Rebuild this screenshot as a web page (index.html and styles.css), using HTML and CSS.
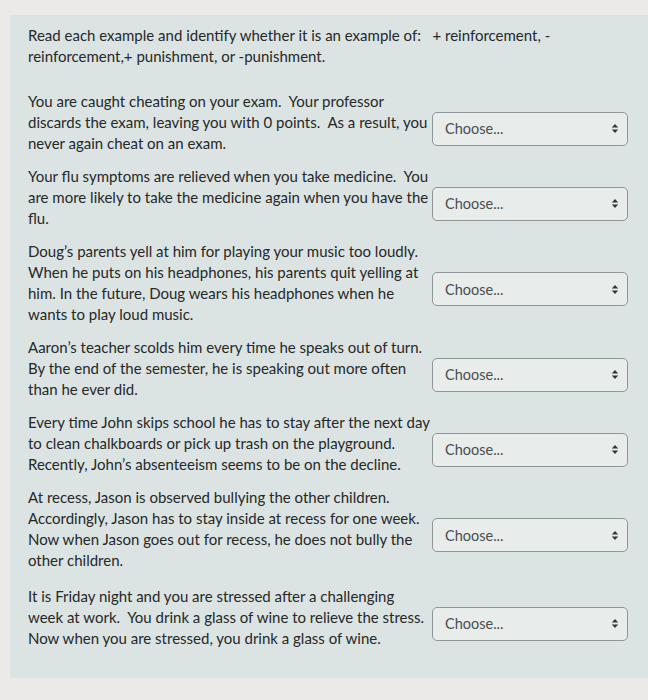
FILE: index.html
```html
<!DOCTYPE html>
<html lang="en">
<head>
<meta charset="utf-8">
<title>Reinforcement and punishment</title>
<link rel="stylesheet" href="styles.css">
</head>
<body>
<div class="panel">
  <p class="intro">Read each example and identify whether it is an example of:&nbsp;&nbsp; + reinforcement, -<br>reinforcement,+ punishment, or -punishment.</p>

  <div class="item">
    <p class="text">You are caught cheating on your exam.&nbsp; Your professor<br>discards the exam, leaving you with 0 points.&nbsp; As a result, you<br>never again cheat on an exam.</p>
    <div class="select"><span>Choose...</span><svg class="arrows" viewBox="0 0 8 12"><path d="M4 1 L7.5 5 H0.5 Z M4 11 L7.5 7 H0.5 Z"/></svg></div>
  </div>

  <div class="item">
    <p class="text">Your flu symptoms are relieved when you take medicine.&nbsp; You<br>are more likely to take the medicine again when you have the<br>flu.</p>
    <div class="select"><span>Choose...</span><svg class="arrows" viewBox="0 0 8 12"><path d="M4 1 L7.5 5 H0.5 Z M4 11 L7.5 7 H0.5 Z"/></svg></div>
  </div>

  <div class="item">
    <p class="text">Doug’s parents yell at him for playing your music too loudly.<br>When he puts on his headphones, his parents quit yelling at<br>him. In the future, Doug wears his headphones when he<br>wants to play loud music.</p>
    <div class="select"><span>Choose...</span><svg class="arrows" viewBox="0 0 8 12"><path d="M4 1 L7.5 5 H0.5 Z M4 11 L7.5 7 H0.5 Z"/></svg></div>
  </div>

  <div class="item">
    <p class="text">Aaron’s teacher scolds him every time he speaks out of turn.<br>By the end of the semester, he is speaking out more often<br>than he ever did.</p>
    <div class="select"><span>Choose...</span><svg class="arrows" viewBox="0 0 8 12"><path d="M4 1 L7.5 5 H0.5 Z M4 11 L7.5 7 H0.5 Z"/></svg></div>
  </div>

  <div class="item">
    <p class="text">Every time John skips school he has to stay after the next day<br>to clean chalkboards or pick up trash on the playground.<br>Recently, John’s absenteeism seems to be on the decline.</p>
    <div class="select"><span>Choose...</span><svg class="arrows" viewBox="0 0 8 12"><path d="M4 1 L7.5 5 H0.5 Z M4 11 L7.5 7 H0.5 Z"/></svg></div>
  </div>

  <div class="item">
    <p class="text">At recess, Jason is observed bullying the other children.<br>Accordingly, Jason has to stay inside at recess for one week.<br>Now when Jason goes out for recess, he does not bully the<br>other children.</p>
    <div class="select"><span>Choose...</span><svg class="arrows" viewBox="0 0 8 12"><path d="M4 1 L7.5 5 H0.5 Z M4 11 L7.5 7 H0.5 Z"/></svg></div>
  </div>

  <div class="item last">
    <p class="text">It is Friday night and you are stressed after a challenging<br>week at work.&nbsp; You drink a glass of wine to relieve the stress.<br>Now when you are stressed, you drink a glass of wine.</p>
    <div class="select"><span>Choose...</span><svg class="arrows" viewBox="0 0 8 12"><path d="M4 1 L7.5 5 H0.5 Z M4 11 L7.5 7 H0.5 Z"/></svg></div>
  </div>
</div>
</body>
</html>
```

FILE: styles.css
```css
html, body {
  margin: 0;
  padding: 0;
}

body {
  background: #eceae8;
  font-family: Lato, "Open Sans", sans-serif;
  font-size: 15px;
  color: #262828;
  padding: 15px 0 0 10px;
  height: 700px;
  box-sizing: border-box;
  overflow: hidden;
}

.panel {
  background: #dbe4e3;
  padding: 10px 0 29px 18px;
  display: flex;
  flex-direction: column;
  gap: 12px;
}

p {
  margin: 0;
  line-height: 21px;
}

.intro {
  margin-bottom: 12px;
}

.item {
  display: flex;
  align-items: center;
}

.item.last {
  margin-top: 3px;
}

.text {
  width: 404px;
  flex: none;
}

.select {
  width: 196px;
  height: 34px;
  margin-top: 12px;
  box-sizing: border-box;
  border: 1px solid #8f9695;
  border-radius: 5px;
  background: #e8eceb;
  display: flex;
  align-items: center;
  justify-content: space-between;
  padding: 0 8px 0 12px;
  color: #4a4e4e;
  font-size: 14.5px;
}

.arrows {
  width: 8px;
  height: 11px;
  fill: #333636;
}
```
